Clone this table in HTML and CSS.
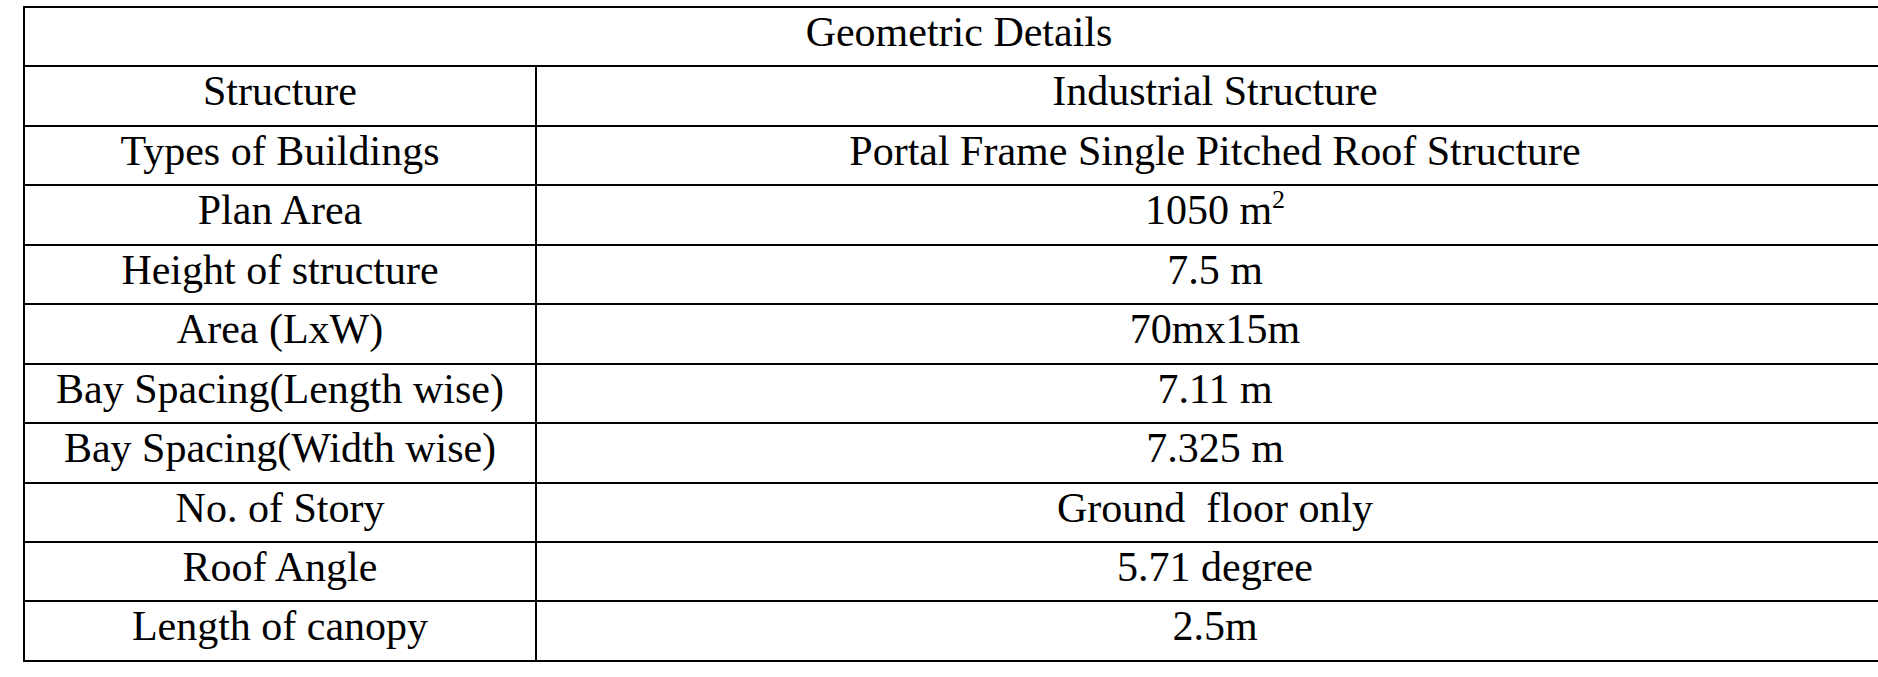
FILE: index.html
```html
<!DOCTYPE html>
<html lang="en">
<head>
<meta charset="utf-8">
<title>Geometric Details</title>
<link rel="stylesheet" href="styles.css">
</head>
<body>
<div class="page">
<table class="geo">
  <colgroup><col class="c1"><col class="c2"></colgroup>
  <tbody>
    <tr><td colspan="2">Geometric Details</td></tr>
    <tr><td>Structure</td><td>Industrial Structure</td></tr>
    <tr><td>Types of Buildings</td><td>Portal Frame Single Pitched Roof Structure</td></tr>
    <tr><td>Plan Area</td><td>1050 m<sup class="sq">2</sup></td></tr>
    <tr><td>Height of structure</td><td>7.5 m</td></tr>
    <tr><td>Area (LxW)</td><td>70mx15m</td></tr>
    <tr><td>Bay Spacing(Length wise)</td><td>7.11 m</td></tr>
    <tr><td>Bay Spacing(Width wise)</td><td>7.325 m</td></tr>
    <tr><td>No. of Story</td><td>Ground&nbsp; floor only</td></tr>
    <tr><td>Roof Angle</td><td>5.71 degree</td></tr>
    <tr><td>Length of canopy</td><td>2.5m</td></tr>
  </tbody>
</table>
</div>
</body>
</html>
```
FILE: styles.css
```css
html, body {
  margin: 0;
  padding: 0;
  background: #fff;
  overflow: hidden;
}
.page {
  width: 1878px;
  height: 677px;
  overflow: hidden;
  padding: 6px 0 0 23px;
  box-sizing: border-box;
}
.geo {
  border-collapse: collapse;
  width: 1872px;
  table-layout: fixed;
  font-family: "Liberation Serif", "Times New Roman", serif;
  font-size: 42px;
  color: #000;
}
.c1 { width: 512px; }
.geo tr { height: 59.45px; }
.geo td {
  border: 2px solid #000;
  padding: 1px 0 0;
  text-align: center;
  vertical-align: top;
  line-height: 47px;
  white-space: nowrap;
}
.sq {
  font-size: 26px;
  line-height: 0;
  vertical-align: 16px;
}
```
